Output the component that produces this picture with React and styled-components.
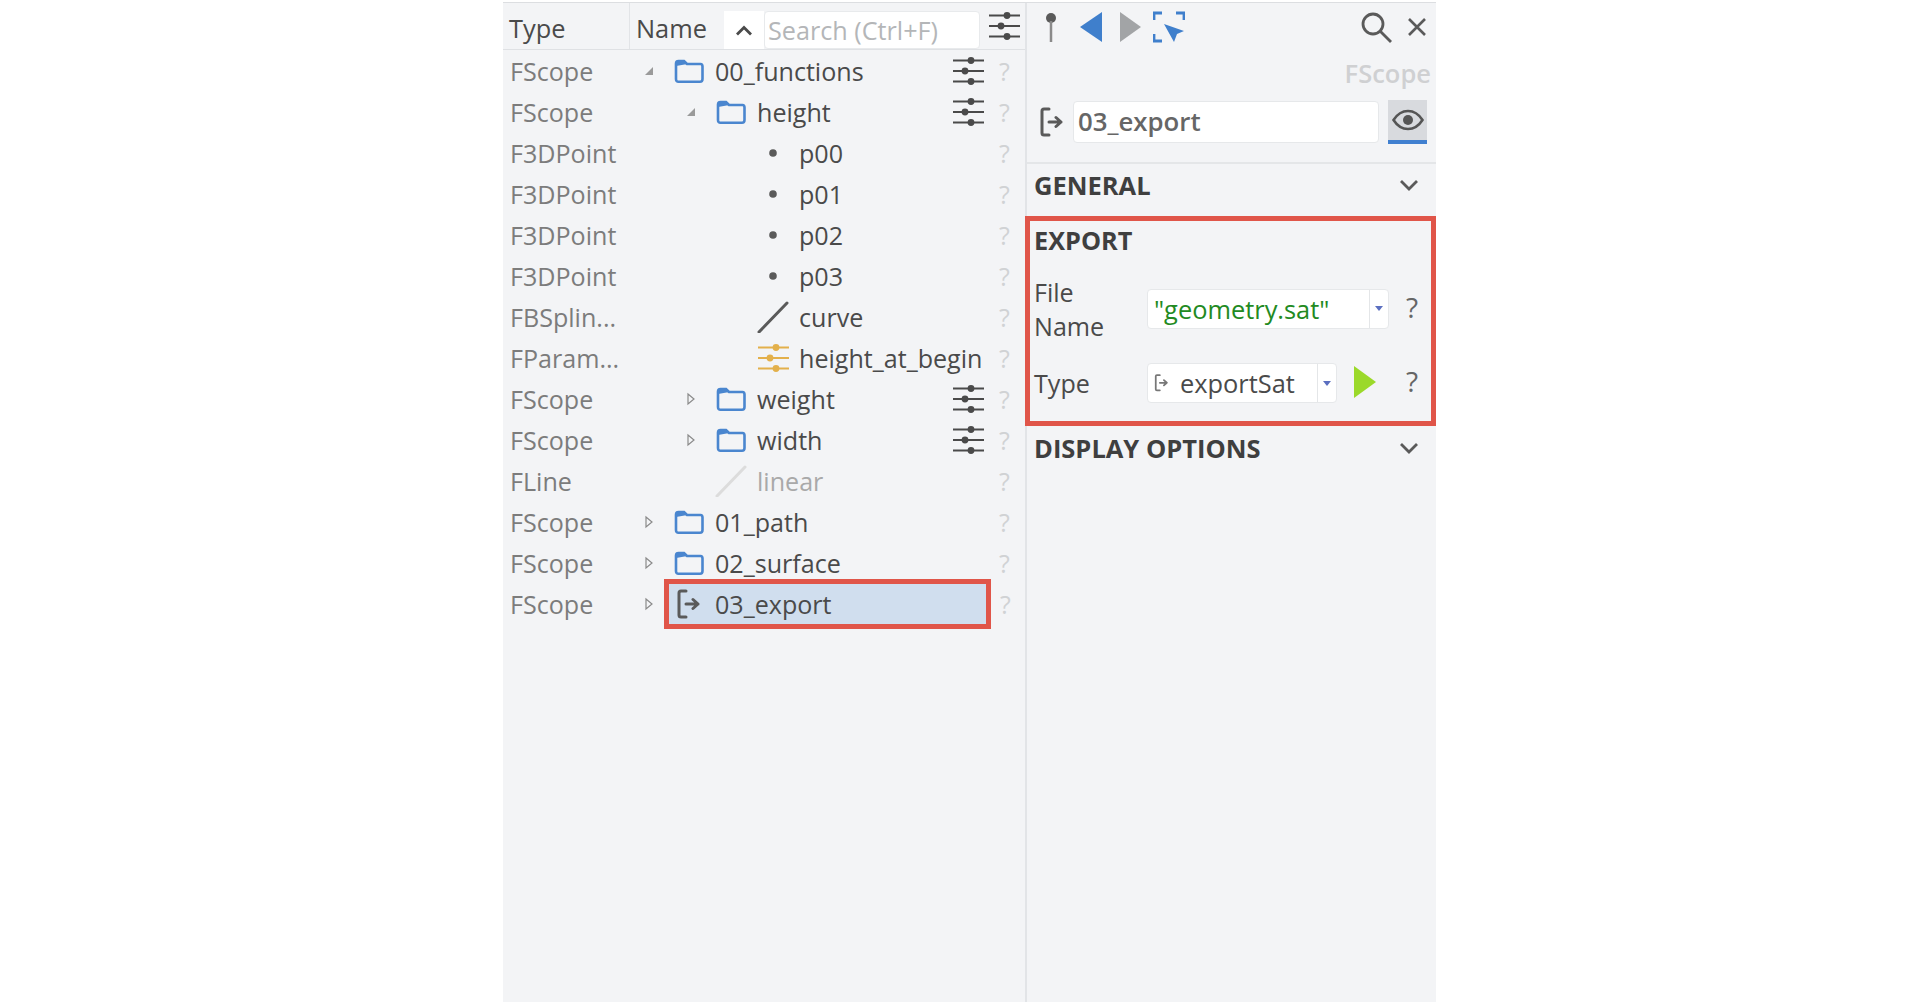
import React from "react";
import styled, { createGlobalStyle } from "styled-components";

const Global = createGlobalStyle`
  html, body { margin: 0; padding: 0; background: #fff; height: 100%; overflow: hidden; }
  body { font-family: "Open Sans", "Noto Sans", sans-serif; }
  * { box-sizing: border-box; }
`;

const Page = styled.div`
  display: flex;
  justify-content: flex-start;
  padding: 2px 0 0 503px;
  height: 1002px;
`;
const Shell = styled.div`
  width: 933px;
  height: 1000px;
  display: flex;
  background: #f3f4f6;
  border-top: 1px solid #dcdee1;
`;
const TreePanel = styled.div`
  width: 524px;
  flex: none;
  border-right: 2px solid #e2e4e7;
`;
const HeaderBar = styled.div`
  display: flex;
  align-items: stretch;
  height: 47px;
  font-size: 25.4px;
  color: #4a4a4a;
  border-bottom: 1px solid #dfe1e4;
`;
const HeadType = styled.div`
  width: 127px;
  flex: none;
  padding: 4px 0 0 6px;
  display: flex;
  align-items: center;
  border-right: 1px solid #e2e4e7;
`;
const HeadName = styled.div`
  width: 94px;
  flex: none;
  padding: 3px 0 0 6px;
  display: flex;
  align-items: center;
`;
const SortButton = styled.div`
  width: 40px;
  flex: none;
  background: #fff;
  display: flex;
  align-items: center;
  justify-content: center;
  margin-top: 8px;
`;
const SearchBox = styled.div`
  width: 216px;
  flex: none;
  height: 38px;
  margin-top: 8px;
  padding-left: 3px;
  background: #fff;
  border: 1px solid #e8eaec;
  border-radius: 4px;
  color: #b4b6b8;
  font-size: 25.2px;
  line-height: 36px;
  white-space: nowrap;
`;
const HeadFilter = styled.div`
  flex: 1;
  display: flex;
  align-items: center;
  justify-content: center;
  padding: 0 0 0 4px;
`;
const Row = styled.div`
  display: flex;
  align-items: center;
  height: 41px;
  font-size: 25.1px;
`;
const TypeCell = styled.div`
  width: 134px;
  flex: none;
  padding-left: 7px;
  color: #7c7c7c;
  white-space: nowrap;
`;
const Indent = styled.div`
  width: ${p => p.$level * 42}px;
  flex: none;
`;
const Twist = styled.div`
  width: 24px;
  height: 24px;
  flex: none;
  display: flex;
  align-items: center;
  justify-content: center;
`;
const NameCell = styled.div`
  flex: 1;
  min-width: 0;
  display: flex;
  align-items: center;
  height: 41px;
  color: ${p => (p.$faded ? "#a9a9a9" : "#4a4a4a")};
  white-space: nowrap;
`;
const IconSlot = styled.div`
  width: 32px;
  flex: none;
  margin-left: 12px;
  margin-right: 10px;
  display: flex;
  align-items: center;
  justify-content: center;
`;
const SelectedCell = styled.div`
  width: 327px;
  height: 50px;
  margin: 1px 0 0 3px;
  flex: none;
  display: flex;
  align-items: center;
  background: #d0deee;
  border: 5px solid #e05549;
  color: #4a4a4a;
  padding-left: 3px;
  position: relative;
  z-index: 1;
`;
const SelectedIcon = styled.div`
  width: 32px;
  flex: none;
  margin-right: 11px;
  display: flex;
  justify-content: center;
`;
const FilterSlot = styled.div`
  width: 32px;
  flex: none;
  display: flex;
  justify-content: center;
`;
const Help = styled.div`
  width: ${p => (p.$narrow ? 29 : 41)}px;
  flex: none;
  text-align: center;
  color: #d0d2d4;
  font-size: 25px;
`;
const Props = styled.div`
  flex: 1;
  min-width: 0;
`;
const Toolbar = styled.div`
  display: flex;
  align-items: center;
  height: 48px;
  padding: 0 9px 0 16px;
`;
const ToolSpacer = styled.div`
  flex: 1;
`;
const TypeCaption = styled.div`
  text-align: right;
  padding-right: 5px;
  color: #cfd0d2;
  font-weight: 600;
  font-size: 25.5px;
  line-height: 44px;
  height: 46px;
`;
const NameBar = styled.div`
  display: flex;
  align-items: center;
  height: 65px;
  padding: 0 0 16px 12px;
`;
const NameInput = styled.div`
  width: 306px;
  height: 42px;
  margin-left: 10px;
  background: #fff;
  border: 1px solid #e6e8ea;
  border-radius: 4px;
  padding-left: 4px;
  font-size: 25.8px;
  font-weight: 600;
  line-height: 38px;
  color: #666;
`;
const EyeButton = styled.div`
  width: 39px;
  height: 44px;
  margin-left: 9px;
  background: #d8dade;
  border-bottom: 4px solid #4080d0;
  display: flex;
  align-items: center;
  justify-content: center;
`;
const SectionHead = styled.div`
  display: flex;
  align-items: center;
  justify-content: space-between;
  height: ${p => p.$h}px;
  padding: 0 17px ${p => p.$pb}px 7px;
  font-size: 25.5px;
  font-weight: 700;
  color: #3f3f3f;
  border-top: ${p => (p.$rule ? "2px solid #e4e6e8" : "none")};
`;
const ExportBox = styled.div`
  height: 210px;
  border: 5px solid #e05549;
  padding: 0 3px 0 4px;
  margin-left: -2px;
  position: relative;
`;
const ExportTitle = styled.div`
  font-size: 25.3px;
  font-weight: 700;
  color: #3f3f3f;
  height: 50px;
  line-height: 36px;
  padding-top: 1px;
`;
const FieldRow = styled.div`
  display: flex;
  align-items: center;
  height: ${p => p.$h}px;
`;
const FieldLabel = styled.div`
  width: 113px;
  flex: none;
  font-size: 25.1px;
  line-height: 34px;
  color: #4a4a4a;
`;
const Combo = styled.div`
  width: ${p => p.$w}px;
  height: ${p => p.$ht}px;
  flex: none;
  display: flex;
  align-items: center;
  background: #fff;
  border: 1px solid #e6e8ea;
  border-radius: 4px;
  font-size: 25.4px;
  color: ${p => p.$color};
  white-space: nowrap;
`;
const ComboText = styled.div`
  flex: 1;
  min-width: 0;
  padding-left: 6px;
  display: flex;
  align-items: center;
  gap: 12px;
`;
const ComboArrow = styled.div`
  width: 19px;
  height: 100%;
  flex: none;
  border-left: 1px solid #e4e6e8;
  display: flex;
  align-items: center;
  justify-content: center;
`;
const PlayButton = styled.div`
  width: 56px;
  flex: none;
  display: flex;
  justify-content: center;
  margin-top: -2px;
`;
const FieldHelp = styled.div`
  margin: -4px 0 0 ${p => p.$ml}px;
  width: 20px;
  text-align: center;
  color: #666;
  font-size: 28px;
`;

const Sliders = ({ color = "#4a4a4a" }) => (
  <svg width="31" height="32" viewBox="0 0 31 32">
    <g stroke={color} strokeWidth="2" fill={color}>
      <path d="M0 5.5h31M0 16h31M0 26.5h31" fill="none" />
      <circle cx="18" cy="5.5" r="3.4" stroke="none" />
      <circle cx="12" cy="16" r="3.4" stroke="none" />
      <circle cx="18" cy="26.5" r="3.4" stroke="none" />
    </g>
  </svg>
);
const Folder = () => (
  <svg width="30" height="26" viewBox="0 0 30 26">
    <path d="M2 21V5.5C2 3.5 3 3 4.5 3H10l3 3h13.5C28 6 28.5 7 28.5 8.5V21c0 2-1 2.8-2.5 2.8H4.5C3 23.8 2 23 2 21Z" fill="none" stroke="#4a86cf" strokeWidth="2.6" />
    <path d="M2 8V4.5C2 3 3 2 4.5 2H10l3.5 4Z" fill="#4a86cf" />
  </svg>
);
const TwistOpen = () => (
  <svg width="12" height="12" viewBox="0 0 12 12"><path d="M10 2v8H2Z" fill="#9a9a9a" /></svg>
);
const TwistClosed = () => (
  <svg width="10" height="14" viewBox="0 0 10 14"><path d="M2 2l6 5-6 5Z" fill="#f3f4f6" stroke="#8a8a8a" strokeWidth="1.2" /></svg>
);
const Dot = () => (
  <svg width="10" height="10" viewBox="0 0 10 10"><circle cx="5" cy="5" r="3.8" fill="#5a5a5a" /></svg>
);
const Line = ({ color, w = 3 }) => (
  <svg width="32" height="32" viewBox="0 0 32 32"><path d="M2 31L30 2" stroke={color} strokeWidth={w} strokeLinecap="round" /></svg>
);
const ExportIcon = ({ size = 24, color = "#5a5a5a", sw = 3 }) => (
  <svg width={size} height={size * 1.25} viewBox="0 0 24 30" fill="none" stroke={color} strokeWidth={sw} strokeLinecap="round" strokeLinejoin="round">
    <path d="M10 2H5C3.5 2 3 3 3 4v22c0 1 .5 2 2 2h5" />
    <path d="M10 15h12M17 10.5l5 4.5-5 4.5" />
  </svg>
);
const Chevron = () => (
  <svg width="20" height="12" viewBox="0 0 20 12"><path d="M2 2l8 8 8-8" fill="none" stroke="#5a5a5a" strokeWidth="2.8" /></svg>
);
const SmallArrow = () => (
  <svg width="8" height="5" viewBox="0 0 8 5"><path d="M0 0h8L4 5Z" fill="#5b6fc0" /></svg>
);

const rows = [
  ["FScope", 0, "open", "folder", "00_functions", true],
  ["FScope", 1, "open", "folder", "height", true],
  ["F3DPoint", 2, "", "dot", "p00"],
  ["F3DPoint", 2, "", "dot", "p01"],
  ["F3DPoint", 2, "", "dot", "p02"],
  ["F3DPoint", 2, "", "dot", "p03"],
  ["FBSplin...", 2, "", "curve", "curve"],
  ["FParam...", 2, "", "param", "height_at_begin"],
  ["FScope", 1, "closed", "folder", "weight", true],
  ["FScope", 1, "closed", "folder", "width", true],
  ["FLine", 1, "", "line", "linear"],
  ["FScope", 0, "closed", "folder", "01_path"],
  ["FScope", 0, "closed", "folder", "02_surface"],
];

const iconFor = kind => {
  if (kind === "folder") return <Folder />;
  if (kind === "dot") return <Dot />;
  if (kind === "curve") return <Line color="#5a5a5a" />;
  if (kind === "line") return <Line color="#dcdcdc" />;
  return <Sliders color="#e3b04b" />;
};

export default function App() {
  return (
    <Page>
      <Global />
      <Shell>
        <TreePanel>
          <HeaderBar>
            <HeadType>Type</HeadType>
            <HeadName>Name</HeadName>
            <SortButton>
              <svg width="18" height="11" viewBox="0 0 18 11"><path d="M2 9.5l7-7 7 7" fill="none" stroke="#4a4a4a" strokeWidth="2.8" /></svg>
            </SortButton>
            <SearchBox>Search (Ctrl+F)</SearchBox>
            <HeadFilter><Sliders /></HeadFilter>
          </HeaderBar>
          {rows.map(([type, level, twist, icon, name, filter]) => (
            <Row key={name}>
              <TypeCell>{type}</TypeCell>
              <Indent $level={level} />
              <Twist>{twist === "open" ? <TwistOpen /> : twist === "closed" ? <TwistClosed /> : null}</Twist>
              <NameCell $faded={icon === "line"}>
                <IconSlot>{iconFor(icon)}</IconSlot>
                {name}
              </NameCell>
              {filter && <FilterSlot><Sliders /></FilterSlot>}
              <Help>?</Help>
            </Row>
          ))}
          <Row>
            <TypeCell>FScope</TypeCell>
            <Twist><TwistClosed /></Twist>
            <SelectedCell>
              <SelectedIcon><ExportIcon /></SelectedIcon>
              03_export
            </SelectedCell>
            <Help $narrow>?</Help>
          </Row>
        </TreePanel>
        <Props>
          <Toolbar>
            <svg width="16" height="32" viewBox="0 0 16 32"><circle cx="8" cy="7" r="5" fill="#5a5a5a" /><path d="M8 10v21" stroke="#8a8a8a" strokeWidth="2.5" /></svg>
            <svg width="24" height="30" viewBox="0 0 24 30" style={{ marginLeft: 21 }}><path d="M22 0v30L0 15Z" fill="#3f7fcc" /></svg>
            <svg width="22" height="30" viewBox="0 0 22 30" style={{ marginLeft: 15 }}><path d="M1 0v30l21-15Z" fill="#a2a4a6" /></svg>
            <svg width="32" height="32" viewBox="0 0 32 32" style={{ marginLeft: 12 }} fill="none">
              <path d="M1 9V2h8M23 2h8v7M1 23v7h8" stroke="#3f7fcc" strokeWidth="2.8" />
              <path d="M11 13l20 7-7 3-3 8Z" fill="#3f7fcc" />
            </svg>
            <ToolSpacer />
            <svg width="32" height="32" viewBox="0 0 32 32" fill="none" stroke="#5a5a5a" strokeWidth="2.8"><circle cx="13" cy="13" r="10" /><path d="M20 20l11 11" /></svg>
            <svg width="20" height="20" viewBox="0 0 20 20" style={{ marginLeft: 15 }}><path d="M2 2l16 16M18 2L2 18" stroke="#5a5a5a" strokeWidth="2.6" /></svg>
          </Toolbar>
          <TypeCaption>FScope</TypeCaption>
          <NameBar>
            <ExportIcon />
            <NameInput>03_export</NameInput>
            <EyeButton>
              <svg width="32" height="22" viewBox="0 0 32 22" fill="none" stroke="#555" strokeWidth="2.6"><path d="M1.5 11C6 4 11 2 16 2s10 2 14.5 9C26 18 21 20 16 20S6 18 1.5 11Z" /><circle cx="16" cy="11" r="5" fill="#555" stroke="none" /></svg>
            </EyeButton>
          </NameBar>
          <SectionHead $rule $h={54} $pb={11}>GENERAL<Chevron /></SectionHead>
          <ExportBox>
            <ExportTitle>EXPORT</ExportTitle>
            <FieldRow $h={75}>
              <FieldLabel>File<br />Name</FieldLabel>
              <Combo $w={242} $ht={40} $color="#228a22">
                <ComboText>"geometry.sat"</ComboText>
                <ComboArrow><SmallArrow /></ComboArrow>
              </Combo>
              <FieldHelp $ml={13}>?</FieldHelp>
            </FieldRow>
            <FieldRow $h={74}>
              <FieldLabel>Type</FieldLabel>
              <Combo $w={190} $ht={40} $color="#4a4a4a">
                <ComboText><ExportIcon size={14} color="#777" sw={3} />exportSat</ComboText>
                <ComboArrow><SmallArrow /></ComboArrow>
              </Combo>
              <PlayButton>
                <svg width="22" height="32" viewBox="0 0 22 32"><path d="M0 0v32l22-16Z" fill="#9bd92a" /></svg>
              </PlayButton>
              <FieldHelp $ml={9}>?</FieldHelp>
            </FieldRow>
          </ExportBox>
          <SectionHead $h={44} $pb={0}>DISPLAY OPTIONS<Chevron /></SectionHead>
        </Props>
      </Shell>
    </Page>
  );
}
